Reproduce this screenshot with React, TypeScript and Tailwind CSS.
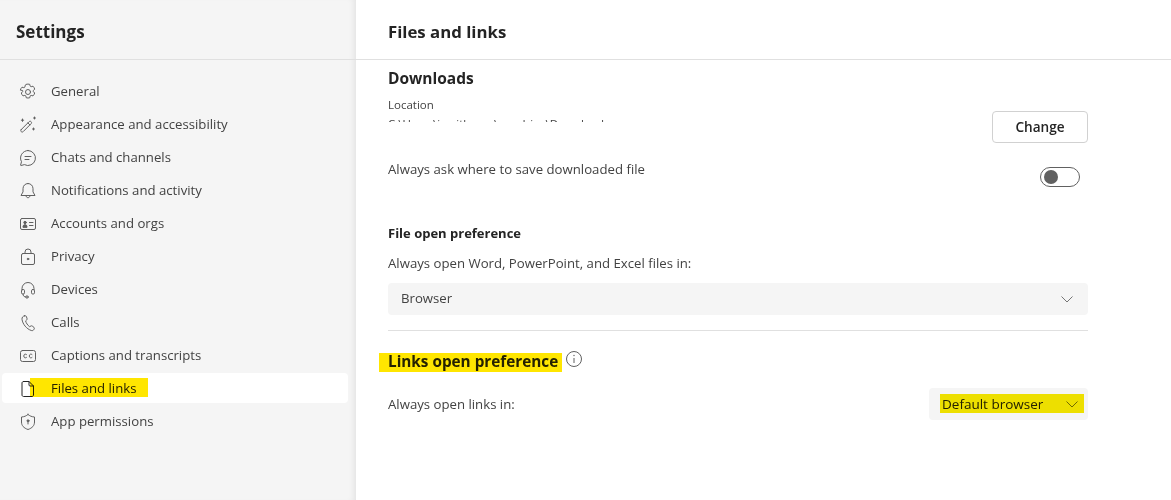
import { ReactNode } from 'react';

const iconProps = {
  width: 20,
  height: 20,
  viewBox: '0 0 20 20',
  fill: 'none',
  stroke: 'currentColor',
  strokeWidth: 1,
  strokeLinecap: 'round' as const,
  strokeLinejoin: 'round' as const,
};

const GearIcon = () => (
  <svg {...iconProps}>
    <circle cx="10" cy="10" r="2.500" />
    <path d="M8.300 2.300c1.100-.3 2.300-.3 3.400 0l.5 1.800c.1.400.6.700 1 .6l1.800-.5c.8.800 1.400 1.800 1.700 2.900l-1.300 1.400c-.3.300-.3.800 0 1.200l1.300 1.300c-.3 1.100-.9 2.100-1.700 2.900l-1.800-.5c-.4-.1-.9.200-1 .6l-.5 1.800c-1.100.3-2.300.3-3.400 0l-.5-1.800c-.1-.4-.6-.7-1-.6l-1.800.5c-.8-.8-1.400-1.800-1.700-2.900l1.300-1.300c.3-.4.3-.9 0-1.200L2.300 8.100c.3-1.100.9-2.100 1.700-2.900l1.800.5c.4.100.9-.2 1-.6l.5-1.800z" />
  </svg>
);

const WandIcon = () => (
  <svg {...iconProps}>
    <path d="M3.200 14.600l7.900-7.900c.6-.6 1.500-.6 2 0 .6.600.6 1.500 0 2l-7.900 7.900c-.6.600-1.400.600-2 0-.6-.5-.6-1.400 0-2z" />
    <path d="M9.900 7.900l2 2" />
    <path d="M16.500 2v2M15.500 3h2M4.500 4v2.400M3.300 5.200h2.400M15.500 13v2M14.500 14h2" />
  </svg>
);

const ChatIcon = () => (
  <svg {...iconProps}>
    <path d="M10 2.500a7.500 7.500 0 1 1-3.600 14.100l-3.300.9c-.3.100-.6-.2-.5-.5l.9-3.300A7.500 7.500 0 0 1 10 2.500z" />
    <path d="M7 8.500h6M7 11.500h4" />
  </svg>
);

const BellIcon = () => (
  <svg {...iconProps}>
    <path d="M10 2.500c-3 0-5 2.300-5 5.200v3.200L3 14.500h14l-2-3.600V7.700c0-2.900-2-5.200-5-5.200z" />
    <path d="M8 14.700c0 1.100.9 2 2 2s2-.9 2-2" />
  </svg>
);

const ContactIcon = () => (
  <svg {...iconProps}>
    <rect x="2.500" y="4.500" width="15" height="11" rx="1.500" />
    <circle cx="7" cy="8.500" r="1.200" fill="currentColor" />
    <path d="M5 13c0-1.800.8-2.300 2-2.300s2 .5 2 2.300z" fill="currentColor" />
    <path d="M11.500 8.500h3.500M11.500 11.500h3.500" />
  </svg>
);

const LockIcon = () => (
  <svg {...iconProps}>
    <rect x="3.500" y="6.500" width="13" height="11" rx="1.500" />
    <path d="M7 6.500V5a3 3 0 0 1 6 0v1.500" />
    <circle cx="10" cy="12" r=".8" fill="currentColor" />
  </svg>
);

const HeadsetIcon = () => (
  <svg {...iconProps}>
    <path d="M4 10V8.500a6 6 0 0 1 12 0V10" />
    <rect x="3.500" y="9.500" width="3" height="4.500" rx="1.200" />
    <rect x="13.500" y="9.500" width="3" height="4.500" rx="1.200" />
    <path d="M5 14c0 2 1 3 3 3" />
    <circle cx="9" cy="17" r="1.200" />
  </svg>
);

const PhoneIcon = () => (
  <svg {...iconProps}>
    <path d="M6.500 2.800h1c.4 0 .8.300.9.700l.7 2.300c.1.400 0 .8-.3 1L7.600 7.900c.5 2 2 4.300 4 5.800l1.500-.8c.4-.2.800-.1 1.100.1l1.900 1.500c.3.300.4.700.2 1.100l-.5 1c-.5.900-1.500 1.300-2.500.9C8.500 15.900 4.700 11.200 4 6.300c-.2-1.800.9-3.300 2.500-3.500z" />
  </svg>
);

const CaptionIcon = () => (
  <svg {...iconProps}>
    <rect x="2.500" y="4.500" width="15" height="11" rx="2" />
    <path d="M8.500 8.500c-1-.9-2.700-.4-2.700 1.500s1.700 2.400 2.700 1.500M14 8.500c-1-.9-2.700-.4-2.700 1.500s1.700 2.400 2.700 1.500" />
  </svg>
);

const FileIcon = () => (
  <svg {...iconProps}>
    <path d="M5.500 2.500h5.500l4.500 4.500v9c0 .8-.7 1.500-1.500 1.500H5.500C4.700 17.500 4 16.800 4 16V4c0-.8.700-1.500 1.500-1.500z" />
    <path d="M11 2.500V6c0 .6.400 1 1 1h3.500" />
  </svg>
);

const ShieldIcon = () => (
  <svg {...iconProps}>
    <path d="M10 2.500c1.800 1.500 3.800 2.300 6.500 2.500v5c0 3.600-2.200 6-6.500 7.500-4.300-1.500-6.500-3.900-6.500-7.500V5c2.700-.2 4.700-1 6.500-2.500z" />
    <circle cx="10" cy="8.800" r="1" fill="currentColor" />
    <path d="M10 9.500v2.500" />
  </svg>
);

const Chevron = ({ className }: { className: string }) => (
  <svg width="12" height="7" viewBox="0 0 12 7" fill="none" stroke="currentColor" strokeWidth="1" className={className}>
    <path d="M.5.500L6 6 11.500.500" />
  </svg>
);

const navItems: { label: string; icon: ReactNode; active?: boolean }[] = [
  { label: 'General', icon: <GearIcon /> },
  { label: 'Appearance and accessibility', icon: <WandIcon /> },
  { label: 'Chats and channels', icon: <ChatIcon /> },
  { label: 'Notifications and activity', icon: <BellIcon /> },
  { label: 'Accounts and orgs', icon: <ContactIcon /> },
  { label: 'Privacy', icon: <LockIcon /> },
  { label: 'Devices', icon: <HeadsetIcon /> },
  { label: 'Calls', icon: <PhoneIcon /> },
  { label: 'Captions and transcripts', icon: <CaptionIcon /> },
  { label: 'Files and links', icon: <FileIcon />, active: true },
  { label: 'App permissions', icon: <ShieldIcon /> },
];

export default function App() {
  return (
    <div className="relative flex h-[500px] w-[1171px] overflow-hidden bg-white text-[13.200px] text-[#424242] font-['Open_Sans','Noto_Sans',sans-serif]">
      <aside className="w-[356px] shrink-0 bg-[#f5f5f5] shadow-[inset_-6px_0_6px_-4px_rgba(0,0,0,0.08)]">
        <div className="flex h-[60px] items-center border-b border-[#e0e0e0] pt-1 pl-4 text-[17px] font-bold text-[#242424]">
          Settings
        </div>
        <nav className="mt-4 flex w-[348px] flex-col gap-[3px] pl-[2px]">
          {navItems.map((item) => (
            <div
              key={item.label}
              className={
                item.active
                  ? 'flex h-[30px] items-center gap-[13px] rounded bg-white pt-[2px] pl-[16px] text-[#242424]'
                  : 'flex h-[30px] items-center gap-[13px] rounded pt-[2px] pl-[16px]'
              }
            >
              <span className={item.active ? 'text-[#242424]' : 'text-[#616161]'}>{item.icon}</span>
              <span className="whitespace-nowrap">{item.label}</span>
            </div>
          ))}
        </nav>
      </aside>

      <main className="flex-1">
        <div className="flex h-[60px] items-center border-b border-[#e0e0e0] pt-1 pl-[32px] text-[16.800px] font-bold text-[#242424]">
          Files and links
        </div>
        <div className="w-[732px] pl-[32px]">
          <h2 className="mt-2 text-[15.500px] leading-5 font-bold text-[#242424]">Downloads</h2>
          <div className="mt-[9px] flex h-[46px] justify-between">
            <div>
              <div className="text-[11.500px] leading-4">Location</div>
              <div className="mt-[3px] h-[6px] overflow-hidden text-[11.500px] leading-4">C:\Users\jsmithuser\onedrive\Downloads</div>
            </div>
            <button className="mt-[14px] h-[32px] w-[96px] rounded border border-[#d1d1d1] bg-white text-[13.600px] font-semibold text-[#242424]">
              Change
            </button>
          </div>
          <div className="mt-[16px] flex h-[28px] justify-between">
            <span className="leading-5">Always ask where to save downloaded file</span>
            <span className="mt-[8px] mr-2 flex h-[20px] w-[40px] items-center rounded-full border border-[#616161] pl-[3px]">
              <span className="size-[14px] rounded-full bg-[#616161]" />
            </span>
          </div>
          <h3 className="mt-[36px] text-[13px] leading-5 font-bold text-[#242424]">File open preference</h3>
          <div className="mt-[10px] leading-5">Always open Word, PowerPoint, and Excel files in:</div>
          <div className="mt-[10px] flex h-[32px] items-center justify-between rounded bg-[#f5f5f5] pr-[15px] pl-[13px]">
            <span>Browser</span>
            <Chevron className="text-[#757575]" />
          </div>
          <div className="mt-[15px] border-t border-[#e0e0e0]" />
          <div className="mt-[20px] flex items-center gap-[7px]">
            <h3 className="text-[15.300px] leading-5 font-bold text-[#242424]">Links open preference</h3>
            <svg width="18" height="18" viewBox="0 0 18 18" fill="none" stroke="#616161" strokeWidth="1" className="-mt-[4px]">
              <circle cx="9" cy="9" r="7.500" />
              <path d="M9 8v5" />
              <circle cx="9" cy="5.500" r=".7" fill="#616161" stroke="none" />
            </svg>
          </div>
          <div className="mt-[17px] flex h-[32px] items-center justify-between">
            <span className="mt-[1px]">Always open links in:</span>
            <div className="flex h-[32px] w-[159px] items-center justify-between rounded bg-[#f5f5f5] pr-[10px] pl-[13px] text-[13.500px] text-[#242424]">
              <span>Default browser</span>
              <Chevron className="text-[#757575]" />
            </div>
          </div>
        </div>
      </main>

      {/* marker strokes over the text */}
      <div className="pointer-events-none absolute top-[378px] left-[30px] h-[19px] w-[118px] bg-[#ffe600] mix-blend-multiply" />
      <div className="pointer-events-none absolute top-[353px] left-[379px] h-[19px] w-[183px] bg-[#ffe600] mix-blend-multiply" />
      <div className="pointer-events-none absolute top-[394px] left-[940px] h-[19px] w-[144px] bg-[#f7e800] mix-blend-multiply" />
    </div>
  );
}
